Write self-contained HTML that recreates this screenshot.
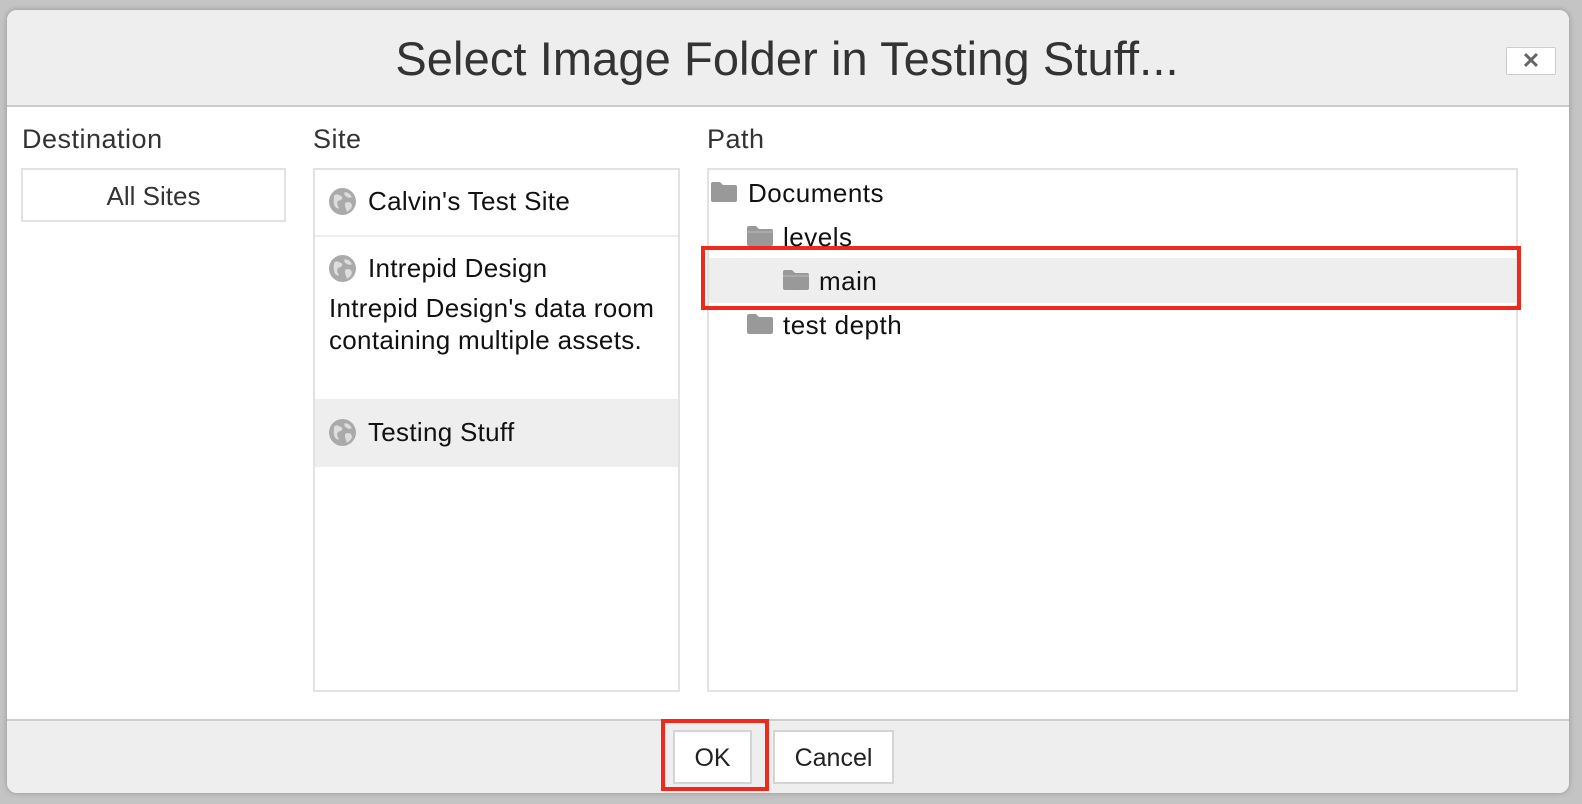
<!DOCTYPE html>
<html><head><meta charset="utf-8"><style>
*{box-sizing:border-box;margin:0;padding:0}
body{width:1582px;height:804px;background:#c4c4c4;position:relative;overflow:hidden;font-family:"Liberation Sans",sans-serif;color:#222}
.abs{position:absolute}
#dlg{left:7px;top:10px;width:1562px;height:783px;background:#fff;border-radius:10px;overflow:hidden;box-shadow:0 0 6px rgba(0,0,0,.25)}
#hdr{left:0;top:0;width:100%;height:97px;background:#eee;border-bottom:2px solid #ccc}
#title{left:0;top:21px;width:1560px;text-align:center;font-size:47px;color:#333;line-height:56px;letter-spacing:0.1px}
#close{left:1499px;top:37px;width:50px;height:28px;background:#fff;border:1px solid #ccc;border-radius:2px;text-align:center;font-size:22px;font-weight:bold;color:#666;line-height:26px}
.lbl{font-size:27px;color:#333;top:114px;letter-spacing:0.5px}
.box{border:2px solid #e2e2e2;background:#fff}
.row{position:absolute;left:0;width:100%;font-size:26px;color:#111;letter-spacing:0.3px}
.globe{display:inline-block;width:27px;height:27px;vertical-align:-5px;margin-right:12px}
.fold{position:absolute;width:28px;height:22px}
.t{position:absolute;font-size:26px;color:#111;letter-spacing:0.5px}
#ftr{left:0;top:709px;width:100%;height:80px;background:#eee;border-top:2px solid #ccc}
.btn{position:absolute;background:#fff;border:2px solid #d4d4d4;font-size:25px;text-align:center;color:#222}
</style></head><body>
<div id="dlg" class="abs">
 <div id="hdr" class="abs"></div>
 <div id="title" class="abs">Select Image Folder in Testing Stuff...</div>
 <div id="close" class="abs">✕</div>
 <div class="abs lbl" style="left:15px">Destination</div>
 <div class="abs lbl" style="left:306px">Site</div>
 <div class="abs lbl" style="left:700px">Path</div>
 <div class="abs box" style="left:14px;top:158px;width:265px;height:54px;text-align:center;font-size:26px;line-height:52px;color:#333">All Sites</div>
 <div class="abs box" style="left:306px;top:158px;width:367px;height:524px;overflow:hidden">
  <div class="row" style="top:0;height:67px;border-bottom:2px solid #eee;padding:16px 0 0 14px"><svg class="globe" viewBox="0 0 26 26"><circle cx="13" cy="13" r="13" fill="#aaa"/><path d="M5 7c3-2 5 0 7 1s0 4 -2 4-3 3-1 6-3 2-4-2 0-6 0-9zM15 4c3 0 6 2 7 5-2 0-3 1-4 0s-4-1-3-5zM16 14c3-1 6 0 6 3s-3 5-5 6c0-3-3-6-1-9z" fill="#ddd"/></svg>Calvin's Test Site</div>
  <div class="row" style="top:69px;height:160px;padding:13px 0 0 14px;line-height:32px"><svg class="globe" viewBox="0 0 26 26"><circle cx="13" cy="13" r="13" fill="#aaa"/><path d="M5 7c3-2 5 0 7 1s0 4 -2 4-3 3-1 6-3 2-4-2 0-6 0-9zM15 4c3 0 6 2 7 5-2 0-3 1-4 0s-4-1-3-5zM16 14c3-1 6 0 6 3s-3 5-5 6c0-3-3-6-1-9z" fill="#ddd"/></svg>Intrepid Design<div style="margin-top:8px">Intrepid Design's data room<br>containing multiple assets.</div></div>
  <div class="row" style="top:229px;height:68px;background:#eee;padding:18px 0 0 14px"><svg class="globe" viewBox="0 0 26 26"><circle cx="13" cy="13" r="13" fill="#aaa"/><path d="M5 7c3-2 5 0 7 1s0 4 -2 4-3 3-1 6-3 2-4-2 0-6 0-9zM15 4c3 0 6 2 7 5-2 0-3 1-4 0s-4-1-3-5zM16 14c3-1 6 0 6 3s-3 5-5 6c0-3-3-6-1-9z" fill="#ddd"/></svg>Testing Stuff</div>
 </div>
 <div class="abs box" style="left:700px;top:158px;width:811px;height:524px"></div>
 <div class="abs" style="left:702px;top:248px;width:807px;height:45px;background:#eee"></div>
 <div class="abs" style="left:694px;top:236px;width:820px;height:64px;border:4px solid #f0291d"></div>
 <svg class="fold" style="left:703px;top:171px" viewBox="0 0 28 22"><path d="M1 3q0-2 2-2h7l3 3h12q2 0 2 2v13q0 2-2 2H3q-2 0-2-2z" fill="#999"/></svg>
 <div class="t" style="left:741px;top:168px">Documents</div>
 <svg class="fold" style="left:739px;top:215px" viewBox="0 0 28 22"><path d="M1 3q0-2 2-2h7l3 3h12q2 0 2 2v13q0 2-2 2H3q-2 0-2-2z" fill="#999"/><path d="M1 7h26" stroke="#bbb" stroke-width="1"/></svg>
 <div class="t" style="left:776px;top:212px">levels</div>
 <svg class="fold" style="left:775px;top:259px" viewBox="0 0 28 22"><path d="M1 3q0-2 2-2h7l3 3h12q2 0 2 2v13q0 2-2 2H3q-2 0-2-2z" fill="#999"/><path d="M1 7h26" stroke="#bbb" stroke-width="1"/></svg>
 <div class="t" style="left:812px;top:256px">main</div>
 <svg class="fold" style="left:739px;top:303px" viewBox="0 0 28 22"><path d="M1 3q0-2 2-2h7l3 3h12q2 0 2 2v13q0 2-2 2H3q-2 0-2-2z" fill="#999"/></svg>
 <div class="t" style="left:776px;top:300px">test depth</div>
 <div id="ftr" class="abs"></div>
 <div class="abs" style="left:654px;top:709px;width:108px;height:72px;border:4px solid #f0291d"></div>
 <div class="btn" style="left:666px;top:720px;width:79px;height:54px;line-height:52px">OK</div>
 <div class="btn" style="left:766px;top:720px;width:121px;height:54px;line-height:52px">Cancel</div>
</div>
</body></html>
